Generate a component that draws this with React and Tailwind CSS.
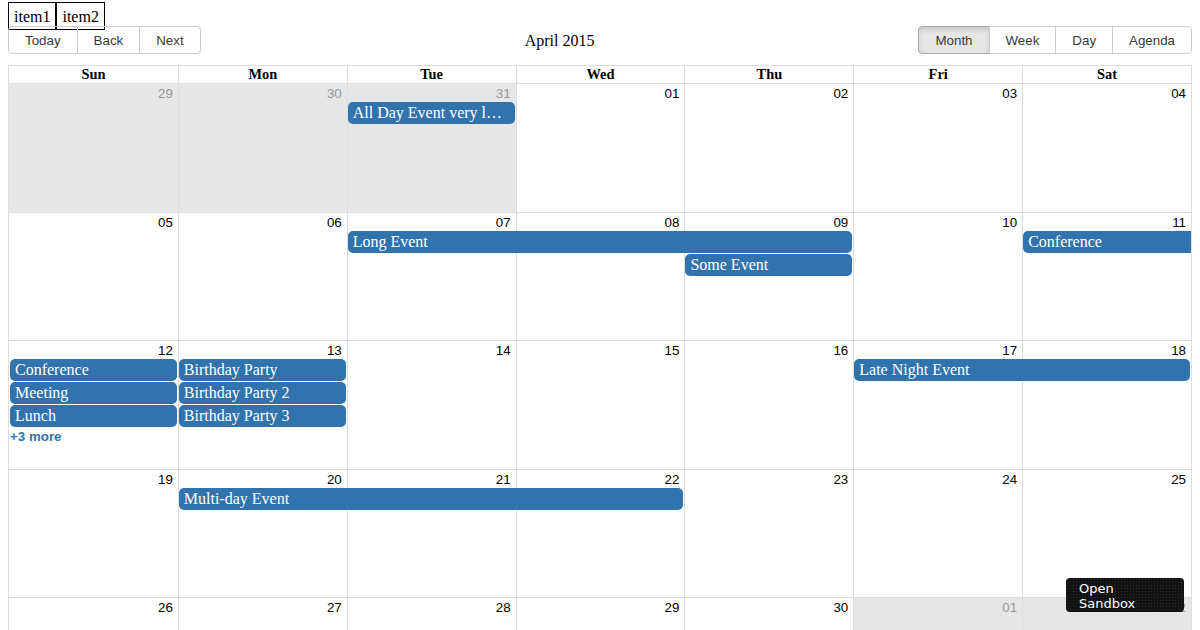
const SERIF = 'font-["Liberation_Serif",serif]';

const DAY_NAMES = ['Sun', 'Mon', 'Tue', 'Wed', 'Thu', 'Fri', 'Sat'];

// one entry per week row; off = date outside the current month
const WEEKS = [
  {
    days: [
      { n: '29', off: true }, { n: '30', off: true }, { n: '31', off: true },
      { n: '01' }, { n: '02' }, { n: '03' }, { n: '04' }
    ],
    events: [
      { title: 'All Day Event very long title', cls: 'col-start-3 col-span-1 row-start-2', shape: 'rounded-[5px]' }
    ]
  },
  {
    days: [{ n: '05' }, { n: '06' }, { n: '07' }, { n: '08' }, { n: '09' }, { n: '10' }, { n: '11' }],
    events: [
      { title: 'Long Event', cls: 'col-start-3 col-span-3 row-start-2', shape: 'rounded-[5px]' },
      { title: 'Some Event', cls: 'col-start-5 col-span-1 row-start-3', shape: 'rounded-[5px]' },
      { title: 'Conference', cls: 'col-start-7 col-span-1 row-start-2', shape: 'rounded-l-[5px]', flush: true }
    ]
  },
  {
    days: [{ n: '12' }, { n: '13' }, { n: '14' }, { n: '15' }, { n: '16' }, { n: '17' }, { n: '18' }],
    events: [
      { title: 'Conference', cls: 'col-start-1 col-span-1 row-start-2', shape: 'rounded-[5px]' },
      { title: 'Meeting', cls: 'col-start-1 col-span-1 row-start-3', shape: 'rounded-[5px]' },
      { title: 'Lunch', cls: 'col-start-1 col-span-1 row-start-4', shape: 'rounded-[5px]' },
      { title: 'Birthday Party', cls: 'col-start-2 col-span-1 row-start-2', shape: 'rounded-[5px]' },
      { title: 'Birthday Party 2', cls: 'col-start-2 col-span-1 row-start-3', shape: 'rounded-[5px]' },
      { title: 'Birthday Party 3', cls: 'col-start-2 col-span-1 row-start-4', shape: 'rounded-[5px]' },
      { title: 'Late Night Event', cls: 'col-start-6 col-span-2 row-start-2', shape: 'rounded-[5px]' }
    ],
    more: { label: '+3 more', cls: 'col-start-1 col-span-1 row-start-5' }
  },
  {
    days: [{ n: '19' }, { n: '20' }, { n: '21' }, { n: '22' }, { n: '23' }, { n: '24' }, { n: '25' }],
    events: [
      { title: 'Multi-day Event', cls: 'col-start-2 col-span-3 row-start-2', shape: 'rounded-[5px]' }
    ]
  },
  {
    days: [
      { n: '26' }, { n: '27' }, { n: '28' }, { n: '29' }, { n: '30' },
      { n: '01', off: true }, { n: '02', off: true }
    ],
    events: []
  }
];

function ToolButton({ label, first, last, active }) {
  return (
    <button
      className={`h-[28px] px-4 pt-px text-[13.33px] font-["Liberation_Sans",sans-serif] text-[#373a3c] border ${
        active
          ? 'bg-[#e6e6e6] border-[#adadad] shadow-[inset_0_3px_5px_rgba(0,0,0,0.125)]'
          : 'bg-transparent border-[#ccc]'
      } ${first ? 'rounded-l-[4px]' : '-ml-px'} ${last ? 'rounded-r-[4px]' : ''}`}
    >
      {label}
    </button>
  );
}

function WeekRow({ week, index }) {
  return (
    <div className={`relative ${index === 0 ? 'h-[127.5px]' : 'h-[128.5px] border-t border-[#ddd]'}`}>
      {/* background cells */}
      <div className="absolute inset-0 grid grid-cols-7">
        {week.days.map((d, i) => (
          <div key={i} className={`${i > 0 ? 'border-l border-[#ddd]' : ''} ${d.off ? 'bg-[#e6e6e6]' : ''}`} />
        ))}
      </div>

      <div className="relative grid grid-cols-7">
        {week.days.map((d, i) => (
          <div
            key={i}
            className={`row-start-1 h-[18px] pt-px pr-[5px] text-right text-[13.33px] leading-[17px] font-["Liberation_Sans",sans-serif] ${
              d.off ? 'text-[#999]' : 'text-black'
            }`}
          >
            {d.n}
          </div>
        ))}
        {week.events.map((ev, i) => (
          <div key={i} className={`${ev.cls} pl-[1px] ${ev.flush ? '' : 'pr-[1px]'} pb-[1px] min-w-0`}>
            <div
              className={`h-[22px] ${ev.shape} bg-[#3174ad] text-white px-[5px] text-[16px] leading-[22px] truncate ${SERIF}`}
            >
              {ev.title}
            </div>
          </div>
        ))}
        {week.more && (
          <div
            className={`${week.more.cls} pl-[1px] pt-px text-[13.33px] font-bold leading-[15px] text-[#3174ad] font-["Liberation_Sans",sans-serif]`}
          >
            {week.more.label}
          </div>
        )}
      </div>
    </div>
  );
}

export default function App() {
  return (
    <div className="relative h-[630px] overflow-hidden bg-white px-2">
      <div className={`flex pt-[2px] text-[16px] text-black ${SERIF}`}>
        <div className="h-[28px] border border-black px-[5px] leading-[27px]">item1</div>
        <div className="h-[28px] border border-black px-[5px] leading-[27px]">item2</div>
      </div>

      {/* toolbar */}
      <div className="flex items-center mt-[-4px] mb-[11px]">
        <div className="flex">
          <ToolButton label="Today" first />
          <ToolButton label="Back" />
          <ToolButton label="Next" last />
        </div>
        <span className={`flex-1 text-center px-[10px] pt-px text-[16px] text-black ${SERIF}`}>April 2015</span>
        <div className="flex">
          <ToolButton label="Month" first active />
          <ToolButton label="Week" />
          <ToolButton label="Day" />
          <ToolButton label="Agenda" last />
        </div>
      </div>

      {/* month view */}
      <div className="border border-[#ddd]">
        <div className="grid grid-cols-7">
          {DAY_NAMES.map((name, i) => (
            <div
              key={name}
              className={`h-[18px] border-b border-[#ddd] ${i > 0 ? 'border-l' : ''} text-center font-bold text-[14.4px] leading-[17px] text-black ${SERIF}`}
            >
              {name}
            </div>
          ))}
        </div>
        {WEEKS.map((week, i) => (
          <WeekRow key={i} week={week} index={i} />
        ))}
      </div>

      <button className="absolute right-[16px] bottom-[18px] w-[118px] h-[34px] rounded-[4px] bg-[#111] bg-[radial-gradient(#2e2e2e_0.7px,transparent_0.7px)] bg-[length:3px_3px] pl-[13px] pt-px text-left text-white text-[13px] leading-[15px] font-['DejaVu_Sans',sans-serif]">
        Open
        <br />
        Sandbox
      </button>
    </div>
  );
}
